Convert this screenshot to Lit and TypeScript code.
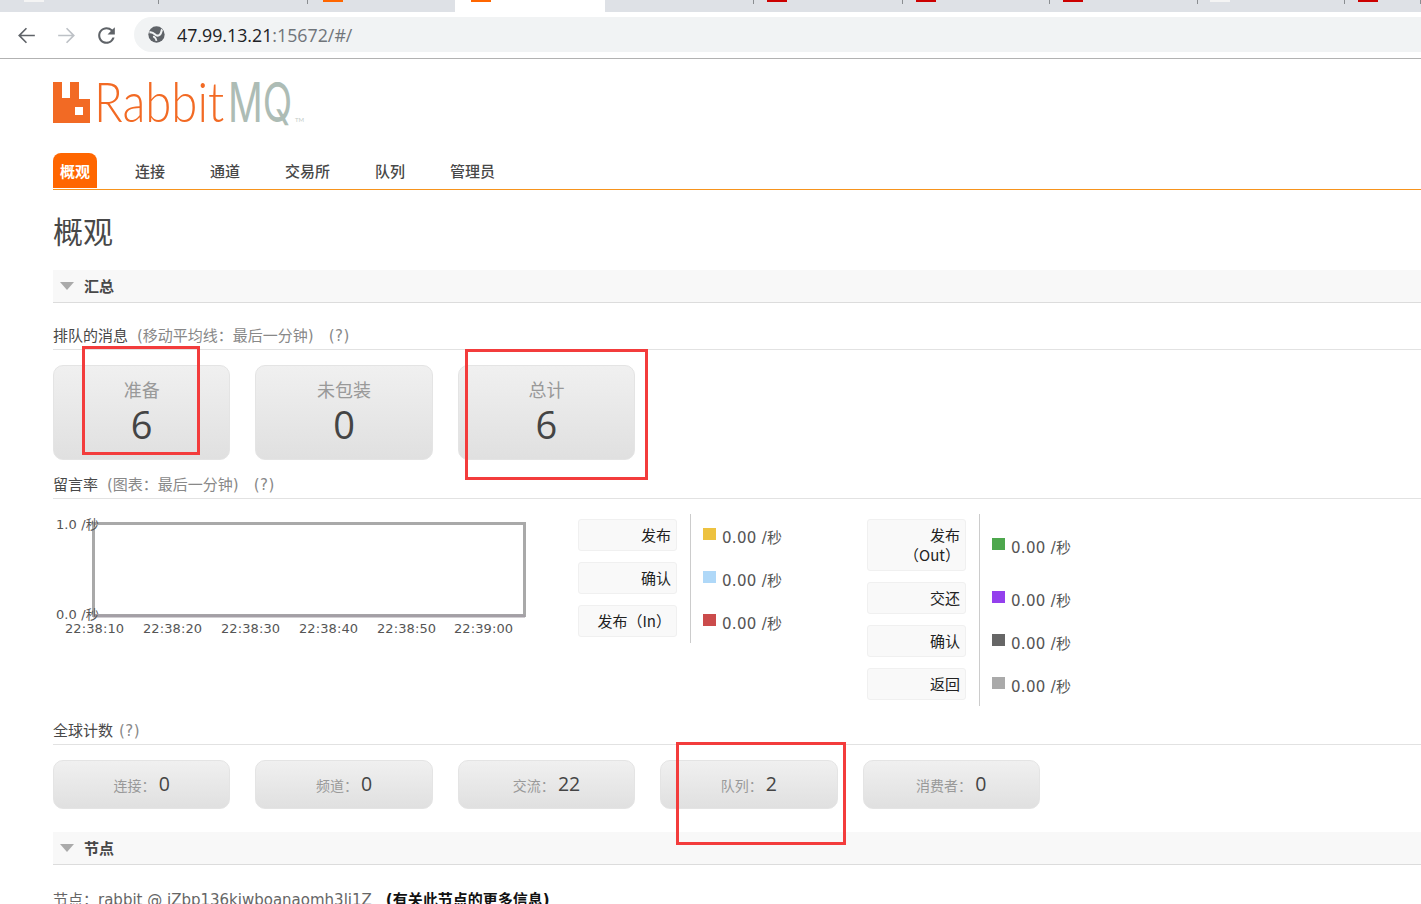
import { LitElement, html, svg, css, nothing, unsafeCSS } from 'lit';
import { customElement } from 'lit/decorators.js';

const CJK = unsafeCSS(`"Noto Sans CJK SC", sans-serif`);
const VERDANA = unsafeCSS(`"DejaVu Sans", "Noto Sans CJK SC", sans-serif`);

// width of each browser tab, and the sliver of favicon that is left in view
const TABS = [
  { w: 159, icon: '#f4f4f4', at: 24 },
  { w: 149, icon: '', at: 0 },
  { w: 147, icon: '#f60', at: 15, last: true },
  { w: 150, icon: '#f60', at: 16, active: true },
  { w: 149, icon: '', at: 0 },
  { w: 149, icon: '#c00', at: 13 },
  { w: 147, icon: '#c00', at: 13 },
  { w: 148, icon: '#c00', at: 13 },
  { w: 147, icon: '#f4f4f4', at: 12 },
  { w: 76, icon: '#c00', at: 13 },
];

const LEGEND_LEFT = [
  { label: '发布', color: '#edc240' },
  { label: '确认', color: '#afd8f8' },
  { label: '发布（In）', color: '#cb4b4b' },
];

const LEGEND_RIGHT = [
  { label: '发布（Out）', color: '#4da74d' },
  { label: '交还', color: '#9440ed' },
  { label: '确认', color: '#666666' },
  { label: '返回', color: '#aaaaaa' },
];

const TOTALS = [
  { label: '连接', value: '0' },
  { label: '频道', value: '0' },
  { label: '交流', value: '22' },
  { label: '队列', value: '2' },
  { label: '消费者', value: '0' },
];

const NAV = ['连接', '通道', '交易所', '队列', '管理员'];
const TIMES = [
  { x: 12, t: '22:38:10' },
  { x: 90, t: '22:38:20' },
  { x: 168, t: '22:38:30' },
  { x: 246, t: '22:38:40' },
  { x: 324, t: '22:38:50' },
  { x: 401, t: '22:39:00' },
];

@customElement('app-root')
export class AppRoot extends LitElement {
  static styles = css`
    :host {
      display: block;
      position: relative;
      height: 904px;
      overflow: hidden;
      background: #fff;
      font-family: ${VERDANA};
      color: #484848;
    }

    /* browser chrome */
    .tabstrip {
      display: flex;
      height: 12px;
      background: #dee1e6;
      overflow: hidden;
    }
    .tab {
      position: relative;
      flex: none;
      height: 12px;
      box-sizing: border-box;
    }
    .tab.tick::after {
      content: '';
      position: absolute;
      right: 0;
      top: 0;
      width: 1px;
      height: 4px;
      background: #8a8d91;
    }
    .tab.active {
      background: #fff;
    }
    .tab.active::before,
    .tab.active::after {
      content: '';
      position: absolute;
      top: 0;
      width: 10px;
      height: 12px;
      background: #dee1e6;
    }
    .tab.active::before {
      left: -10px;
      border-bottom-right-radius: 8px;
    }
    .tab.active::after {
      right: -10px;
      border-bottom-left-radius: 8px;
    }
    .favicon {
      position: absolute;
      top: 0;
      width: 20px;
      height: 2px;
    }
    .toolbar {
      display: flex;
      align-items: center;
      height: 47px;
      box-sizing: border-box;
      border-bottom: 1px solid #b2b2b2;
      padding: 0 0 0 14px;
    }
    .nav-btn {
      display: flex;
      width: 25px;
      height: 25px;
      margin-right: 15px;
    }
    .nav-btn svg {
      width: 25px;
      height: 25px;
    }
    .omnibox {
      flex: 1;
      display: flex;
      align-items: center;
      height: 35px;
      margin-bottom: 1px;
      padding-left: 14px;
      border-radius: 17.5px 0 0 17.5px;
      background: #f1f3f4;
      font: 17.8px 'Open Sans', sans-serif;
      color: #202124;
    }
    .omnibox svg {
      width: 17px;
      height: 17px;
      margin-right: 12px;
    }
    .omnibox span {
      color: #70757a;
    }

    /* page */
    .page {
      padding-left: 53px;
    }
    .logo {
      display: flex;
      align-items: flex-start;
      height: 94px;
      padding-top: 23px;
      box-sizing: border-box;
    }
    .logo svg {
      width: 37px;
      height: 41px;
      flex: none;
    }
    .wordmark {
      display: flex;
      align-items: baseline;
      margin: -14px 0 0 4px;
      font: 300 55px/66px Lato, sans-serif;
      color: #f26a24;
      white-space: nowrap;
    }
    .wordmark .rabbit {
      display: inline-block;
      width: 134px;
      transform: scaleX(0.86);
      transform-origin: left center;
    }
    .wordmark .mq {
      display: inline-block;
      width: 67px;
      font: 400 55px/66px Inter, sans-serif;
      color: #adbcb5;
      transform: scaleX(0.7);
      transform-origin: left center;
    }
    .wordmark sup {
      font: 400 6px/8px Lato, sans-serif;
      color: #c4cbc8;
    }
    nav {
      display: flex;
      gap: 31px;
      height: 37px;
      box-sizing: border-box;
      border-bottom: 1px solid #f7941d;
      font: 500 15px/36px ${CJK};
      color: #484848;
    }
    nav a {
      padding: 0 7px;
      height: 35px;
    }
    nav a.selected {
      background: #f60;
      color: #fff;
      font-weight: 700;
      border-radius: 8px 8px 0 0;
    }
    h1 {
      margin: 18px 0 18px;
      font: 400 30px/44px ${CJK};
      color: #484848;
    }
    .section-bar {
      display: flex;
      align-items: center;
      height: 33px;
      box-sizing: border-box;
      border-bottom: 1px solid #dcdcdc;
      background: #f8f8f8;
      font: 700 15px/32px ${CJK};
      color: #484848;
    }
    .section-bar i {
      width: 0;
      height: 0;
      margin: 0 10px 0 7px;
      border: 7.5px solid transparent;
      border-top: 8px solid #aaa;
      border-bottom: 0;
    }
    h3 {
      margin: 0;
      height: 27px;
      box-sizing: border-box;
      border-bottom: 1px solid #e2e2e2;
      font: 400 15px/27px ${VERDANA};
      color: #484848;
      white-space: nowrap;
    }
    h3 span {
      color: #888;
      margin-left: 9px;
    }
    h3 span.help {
      margin-left: 15px;
      letter-spacing: 0.5px;
    }
    h3 span.help.near {
      margin-left: 6px;
    }
    .first {
      margin-top: 20px;
    }
    .boxes {
      display: flex;
      gap: 25px;
    }
    .box {
      width: 177.4px;
      box-sizing: border-box;
      border: 1px solid #e4e4e4;
      border-radius: 10px;
      background: linear-gradient(#f0f0f0, #e0e0e0);
      text-align: center;
      color: #999;
    }
    .queued {
      margin: 15px 0 12px;
    }
    .queued .box {
      height: 95px;
      padding-top: 11px;
      font: 18px/24px ${CJK};
    }
    .queued .box strong {
      display: block;
      margin-top: 2px;
      font: 400 38px/42px 'Open Sans', sans-serif;
      color: #444;
    }
    .rates {
      display: grid;
      grid-template-columns: 525px 289px auto;
      margin: 15px 0 12px;
      height: 192px;
    }
    .chart {
      display: block;
      width: 480px;
      height: 130px;
      font-family: ${VERDANA};
      font-size: 13px;
      letter-spacing: 0.1px;
    }
    .legend {
      display: grid;
      grid-template-columns: 112px auto;
      align-self: start;
    }
    .legend .key {
      padding: 5px 13px 6px 0;
      box-sizing: border-box;
    }
    .legend .key div {
      width: 99px;
      min-height: 32px;
      box-sizing: border-box;
      padding: 5px 5px 5px 14px;
      border: 1px solid #f0f0f0;
      border-radius: 3px;
      background: #f9f9f9;
      font: 15px/20px ${CJK};
      color: #222;
      text-align: right;
    }
    .legend .value {
      display: flex;
      align-items: center;
      gap: 6px;
      padding: 2px 0 0 12px;
      border-left: 1px solid #ccc;
      font-size: 15px;
      letter-spacing: 0.3px;
      color: #555;
      white-space: nowrap;
    }
    .legend .value i {
      width: 13px;
      height: 12px;
      margin-top: -6px;
    }
    .totals {
      margin-top: 15px;
    }
    .totals .box {
      height: 49px;
      font: 14px/46px ${CJK};
    }
    .totals .box strong {
      font: 400 19.5px/46px 'Open Sans', sans-serif;
      color: #444;
    }
    .node-bar {
      margin-top: 23px;
    }
    .node-line {
      margin-top: 23px;
      font: 15px/24px ${VERDANA};
      color: #666;
      white-space: nowrap;
    }
    .node-line b {
      margin-left: 14px;
      font-weight: 700;
      color: #111;
    }

    /* red boxes someone drew on top of the screenshot */
    .mark {
      position: absolute;
      box-sizing: border-box;
      border: 3px solid #f33c3c;
    }
  `;

  private renderLegend(rows: { label: string; color: string }[]) {
    return html`<div class="legend">
      ${rows.map(
        (r) => html`
          <div class="key"><div>${r.label}</div></div>
          <div class="value"><i style="background:${r.color}"></i>0.00 /秒</div>
        `,
      )}
    </div>`;
  }

  render() {
    return html`
      <div class="tabstrip">
        ${TABS.map(
          (t) => html`<div
            class="tab ${t.active ? 'active' : t.last ? '' : 'tick'}"
            style="width:${t.w}px"
          >
            ${t.icon
              ? html`<div class="favicon" style="left:${t.at}px;background:${t.icon}"></div>`
              : nothing}
          </div>`,
        )}
      </div>
      <div class="toolbar">
        <div class="nav-btn">
          <svg viewBox="0 0 24 24" fill="#5f6368">
            <path d="M20 11.200H6.900l5.600-5.600L11.400 4.500 3.900 12l7.500 7.500 1.100-1.100-5.600-5.600H20z" />
          </svg>
        </div>
        <div class="nav-btn">
          <svg viewBox="0 0 24 24" fill="#bdc1c6">
            <path d="M4 11.200h13.100l-5.600-5.600 1.100-1.100 7.500 7.500-7.500 7.500-1.100-1.100 5.600-5.600H4z" />
          </svg>
        </div>
        <div class="nav-btn">
          <svg viewBox="0 0 24 24" fill="#5f6368">
            <path
              d="M17.650 6.350A7.960 7.960 0 0 0 12 4c-4.420 0-7.990 3.580-7.990 8s3.570 8 7.990 8c3.730 0 6.840-2.550 7.730-6h-2.080A5.990 5.990 0 0 1 12 18c-3.310 0-6-2.690-6-6s2.690-6 6-6c1.660 0 3.140.69 4.220 1.780L13 11h7V4l-2.350 2.350z"
            />
          </svg>
        </div>
        <div class="omnibox">
          <svg viewBox="0 0 24 24">
            <circle cx="12" cy="12" r="11.500" fill="#5f6368" />
            <path
              d="M2 9c4-1 6 1 8 3s5 2 7 0 2-6 3-7"
              fill="none"
              stroke="#f1f3f4"
              stroke-width="3"
            />
            <path d="M7 15c2 0 4 2 5 6" fill="none" stroke="#f1f3f4" stroke-width="2.500" />
          </svg>
          47.99.13.21<span>:15672/#/</span>
        </div>
      </div>

      <div class="page">
        <div class="logo">
          <svg viewBox="0 0 37 41">
            <path
              fill="#f26a24"
              fill-rule="evenodd"
              d="M0 0h9v16h8V0h9v17h11v24H0z M22 25v8h8v-8z"
            />
          </svg>
          <div class="wordmark">
            <span class="rabbit">Rabbit</span><span class="mq">MQ</span><sup>TM</sup>
          </div>
        </div>
        <nav>
          <a class="selected">概观</a>
          ${NAV.map((n) => html`<a>${n}</a>`)}
        </nav>
        <h1>概观</h1>

        <div class="section-bar"><i></i>汇总</div>
        <h3 class="first">
          排队的消息<span>(移动平均线：最后一分钟)</span><span class="help">(?)</span>
        </h3>
        <div class="boxes queued">
          <div class="box">准备<strong>6</strong></div>
          <div class="box">未包装<strong>0</strong></div>
          <div class="box">总计<strong>6</strong></div>
        </div>

        <h3>留言率<span>(图表：最后一分钟)</span><span class="help">(?)</span></h3>
        <div class="rates">
          <svg class="chart" viewBox="0 0 480 130">
            <rect x="40.500" y="9.500" width="431" height="92" fill="#fff" stroke="#a9a9a9" stroke-width="3" />
            <line x1="40" y1="102" x2="472" y2="102" stroke="#a49fa6" stroke-width="3" />
            <g fill="#555">
              <text x="3" y="15">1.0 /秒</text>
              <text x="3" y="105">0.0 /秒</text>
              ${TIMES.map((l) => svg`<text x="${l.x}" y="119">${l.t}</text>`)}
            </g>
          </svg>
          ${this.renderLegend(LEGEND_LEFT)} ${this.renderLegend(LEGEND_RIGHT)}
        </div>

        <h3>全球计数<span class="help near">(?)</span></h3>
        <div class="boxes totals">
          ${TOTALS.map((t) => html`<div class="box">${t.label}： <strong>${t.value}</strong></div>`)}
        </div>

        <div class="section-bar node-bar"><i></i>节点</div>
        <div class="node-line">节点：rabbit @ iZbp136kiwboanaomh3li1Z<b>(有关此节点的更多信息)</b></div>
      </div>

      <div class="mark" style="left:82px;top:346px;width:118px;height:109px"></div>
      <div class="mark" style="left:465px;top:349px;width:183px;height:131px"></div>
      <div class="mark" style="left:676px;top:742px;width:170px;height:103px"></div>
    `;
  }
}
